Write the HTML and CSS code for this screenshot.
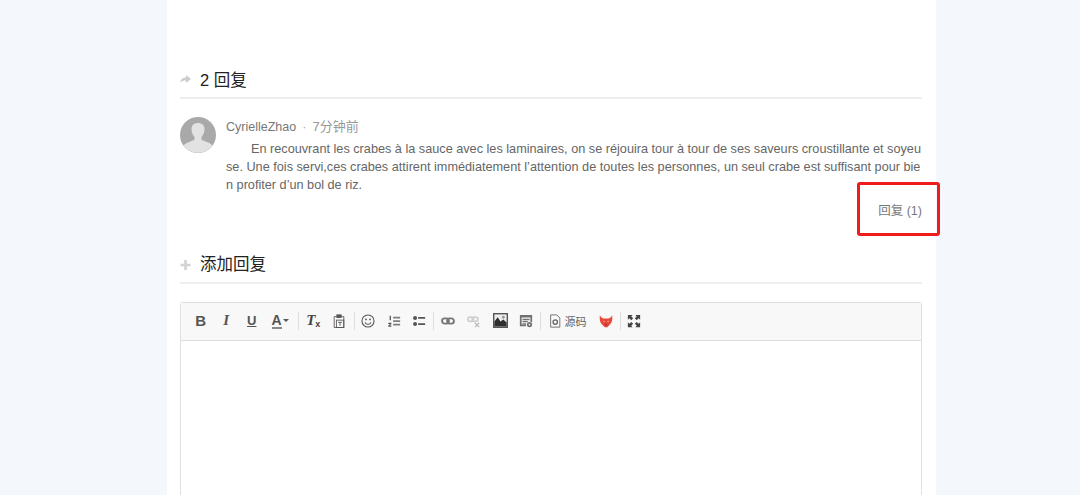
FILE: index.html
```html
<!DOCTYPE html>
<html lang="zh">
<head>
  <meta charset="UTF-8" />
  <meta name="viewport" content="width=device-width, initial-scale=1.0" />
  <title>回复</title>
  <link rel="stylesheet" href="styles.css">
</head>
<body>

  <div class="page">
    <div class="section-title replies-title">
      <svg class="title-icon" viewBox="0 0 11 10"><path d="M0 8.500C.6 5.500 2.500 3.500 6 3.500V1L11 5 6 9V6.500C3.500 6.500 1.500 7 0 8.500Z" fill="#ccc"/></svg>
      <span>2 回复</span>
    </div>

    <div class="comment">
      <svg class="avatar" viewBox="0 0 36 36">
        <circle cx="18" cy="18" r="18" fill="#a9a9a9"/>
        <path d="M3.500 28.500C7 25 12 24.500 14.500 22.500V20C12.500 18 11.500 14.500 11.500 12C11.500 8 14.500 6 18 6S24.500 8 24.500 12C24.500 14.500 23.500 18 21.500 20V22.500C24 24.500 29 25 32.500 28.500A18 18 0 0 1 3.500 28.500Z" fill="#e2e2e2"/>
      </svg>
      <div class="comment-main">
        <div class="comment-meta">
          <span class="author">CyrielleZhao</span><span class="dot">·</span><span class="time">7分钟前</span>
        </div>
        <p class="comment-text">En recouvrant les crabes à la sauce avec les laminaires, on se réjouira tour à tour de ses saveurs croustillante et soyeuse. Une fois servi,ces crabes attirent immédiatement l’attention de toutes les personnes, un seul crabe est suffisant pour bien profiter d’un bol de riz.</p>
        <div class="comment-actions">回复 (1)</div>
      </div>
      <div class="highlight-box"></div>
    </div>

    <div class="section-title add-title">
      <svg class="title-icon" viewBox="0 0 11 11"><path d="M4 0H7V4H11V7H7V11H4V7H0V4H4Z" fill="#d4d4d4"/></svg>
      <span>添加回复</span>
    </div>

    <div class="editor">
      <div class="toolbar">
        <span class="btn txt-b">B</span>
        <span class="btn txt-i">I</span>
        <span class="btn txt-u">U</span>
        <span class="btn btn-color"><span class="txt-a">A</span><i class="caret"></i></span>
        <i class="sep sep-a"></i>
        <span class="btn txt-clear">T<small>x</small></span>
        <span class="btn">
          <svg class="icon" viewBox="0 0 16 16" fill="none" stroke="#555"><path d="M5 3H2.500V15.500H13.500V3H11"/><rect x="5.500" y="1" width="5" height="3" fill="#555"/><rect x="5" y="7" width="8.500" height="8.500"/><path d="M7 9.500H11.500M9.200 9.500V13.500"/></svg>
        </span>
        <i class="sep sep-c"></i>
        <span class="btn">
          <svg class="icon" viewBox="0 0 16 16" fill="none" stroke="#555" stroke-width="1.200"><circle cx="8" cy="8" r="6.900"/><circle cx="5.700" cy="6.200" r="1" fill="#555" stroke="none"/><circle cx="10.300" cy="6.200" r="1" fill="#555" stroke="none"/><path d="M4.500 9.500C5.500 12.500 10.500 12.500 11.500 9.500"/></svg>
        </span>
        <span class="btn">
          <svg class="icon" viewBox="0 0 16 16" fill="#555"><path d="M7 3H15V5H7ZM7 7H15V9H7ZM7 11H15V13H7Z" opacity=".75"/><path d="M3 2H4.500V7H3ZM1.500 10H5V11.500L3.200 13H5V14.500H1.500V13L3.500 11.300H1.500Z"/></svg>
        </span>
        <span class="btn">
          <svg class="icon" viewBox="0 0 16 16" fill="#555"><circle cx="3.500" cy="4.500" r="2.300"/><circle cx="3.500" cy="11.500" r="2.300"/><path d="M7 3.500H15V5.500H7ZM7 10.500H15V12.500H7Z"/></svg>
        </span>
        <i class="sep sep-b"></i>
        <span class="btn">
          <svg class="icon" viewBox="0 0 16 16" fill="none" stroke="#777" stroke-width="2.200"><rect x="1.200" y="5" width="7.800" height="6" rx="3"/><rect x="7" y="5" width="7.800" height="6" rx="3"/></svg>
        </span>
        <span class="btn btn-wide">
          <svg class="icon" viewBox="0 0 16 16" fill="none" stroke="#cfcfcf" stroke-width="2"><rect x="1" y="3.500" width="6.500" height="5" rx="2.500"/><rect x="6" y="3.500" width="6.500" height="5" rx="2.500"/><path d="M9 10L14 15M14 10L9 15" stroke="#bbb" stroke-width="1.500"/></svg>
        </span>
        <span class="btn">
          <svg class="icon icon-lg" viewBox="0 0 16 16"><rect x="0" y="0" width="16" height="16" fill="#555"/><rect x="1.500" y="1.500" width="13" height="13" fill="#eee"/><path d="M1.500 14.500V9L5 4.500L8 9L11 7L14.500 10V14.500Z" fill="#2e2e2e"/><circle cx="11" cy="4.500" r="1.500" fill="#999"/></svg>
        </span>
        <span class="btn">
          <svg class="icon" viewBox="0 0 16 16" fill="#707070"><path d="M1 1H15V9H13V4H3V12H8V14H1Z"/><path d="M4 5.500H12V7H4ZM4 8H10V9.500H4ZM4 10.500H8V12H4Z"/><circle cx="12" cy="12" r="3"/><circle cx="12" cy="12" r="1" fill="#f8f8f8"/></svg>
        </span>
        <i class="sep"></i>
        <span class="btn btn-source">
          <svg class="icon" viewBox="0 0 16 16" fill="none" stroke="#666"><path d="M3 1H10L13.500 4.500V15H3Z"/><circle cx="8.300" cy="9.200" r="2.500" stroke-width="1.500"/></svg>
          <span class="source-label">源码</span>
        </span>
        <span class="btn">
          <svg class="icon" viewBox="0 0 16 16"><path d="M1 1C2 3.500 3.500 4.500 5 5H11C12.500 4.500 14 3.500 15 1C15.500 6 15 9 13 11.500L9.500 15H6.500L3 11.500C1 9 .5 6 1 1Z" fill="#e8473a"/><path d="M5 7.500L7 9H5ZM11 7.500L9 9H11Z" fill="#f9b9a8"/><path d="M6 11H10L8 14Z" fill="#b5372c"/></svg>
        </span>
        <i class="sep"></i>
        <span class="btn">
          <svg class="icon" viewBox="0 0 16 16" fill="#444"><path d="M1 1H6.500L4.800 2.700L7 4.900L4.900 7L2.700 4.800L1 6.500ZM15 1V6.500L13.300 4.800L11.100 7L9 4.900L11.200 2.700L9.500 1ZM1 15V9.500L2.700 11.200L4.900 9L7 11.100L4.800 13.300L6.500 15ZM15 15H9.500L11.200 13.300L9 11.100L11.100 9L13.300 11.200L15 9.500Z"/></svg>
        </span>
      </div>
      <div class="editor-body"></div>
    </div>
  </div>

</body>
</html>
```

FILE: styles.css
```css
html, body {
  height: 100%;
}

body {
  margin: 0;
  background: #f4f7fb;
  font-family: "Liberation Sans", "Noto Sans CJK SC", sans-serif;
  overflow: hidden;
}

.page {
  width: 742px;
  height: 495px;
  margin-left: 167px;
  padding: 0 14px 0 13px;
  background: #fff;
  display: flex;
  flex-direction: column;
}

.section-title {
  display: flex;
  align-items: center;
  flex: none;
  height: 36px;
  border-bottom: 2px solid #eee;
  color: #222;
  font-size: 16.5px;
}

.replies-title {
  margin-top: 61px;
}

.title-icon {
  width: 11px;
  height: 10px;
  margin-right: 9px;
}

.comment {
  position: relative;
  display: flex;
  flex: none;
  margin-top: 18px;
}

.avatar {
  width: 36px;
  height: 36px;
  flex: none;
  margin-right: 10px;
}

.comment-main {
  flex: 1;
  padding-top: 1px;
  font-size: 12.7px;
  line-height: 18px;
  color: #666;
  min-width: 0;
}

.comment-meta {
  height: 18px;
  margin-bottom: 4px;
  color: #777;
}

.author {
  font-size: 12.5px;
}

.dot {
  margin: 0 6px;
  color: #aaa;
}

.time {
  color: #999;
  font-size: 13px;
}

.comment-text {
  margin: 0;
  text-indent: 25px;
  word-break: break-all;
}

.comment-actions {
  margin-top: 8px;
  text-align: right;
  font-size: 12.5px;
  color: #777;
}

.highlight-box {
  position: absolute;
  right: -18px;
  top: 65px;
  box-sizing: border-box;
  width: 83px;
  height: 54px;
  border: 3px solid #f01c1c;
  border-radius: 3px;
}

.add-title {
  box-sizing: border-box;
  height: 38px;
  margin-top: 26px;
  padding-bottom: 2px;
}

.add-title .title-icon {
  margin-top: 4px;
}

.editor {
  display: flex;
  flex-direction: column;
  flex: 1;
  margin-top: 18px;
  border: 1px solid #e0e0e0;
  border-bottom: 0;
  border-radius: 3px 3px 0 0;
  min-height: 0;
}

.toolbar {
  display: flex;
  align-items: center;
  flex: none;
  height: 35px;
  padding: 0 0 2px 7px;
  background: #f8f8f8;
  border-bottom: 1px solid #ddd;
  color: #555;
}

.btn {
  display: flex;
  align-items: center;
  justify-content: center;
  flex: none;
  width: 25.5px;
  height: 22px;
  font-size: 13px;
  font-weight: bold;
}

.btn-wide {
  width: 27px;
}

.btn-color {
  width: 28px;
  justify-content: flex-start;
  padding-left: 7px;
  box-sizing: border-box;
}

.txt-b {
  font-size: 15px;
}

.txt-i {
  font-family: "Liberation Serif", serif;
  font-style: italic;
  font-size: 15px;
}

.txt-u {
  text-decoration: underline;
  font-size: 13px;
}

.txt-a {
  font-size: 14px;
  border-bottom: 2px solid #888;
  line-height: 14px;
}

.caret {
  width: 0;
  height: 0;
  margin-left: 1px;
  border: 3px solid transparent;
  border-top-color: #555;
  border-bottom: 0;
}

.txt-clear {
  font-family: "Liberation Serif", serif;
  font-style: italic;
  font-size: 15px;
  color: #444;
}

.txt-clear small {
  font-family: "Liberation Sans", sans-serif;
  font-style: normal;
  font-size: 9px;
  margin-top: 6px;
}

.icon {
  width: 14px;
  height: 14px;
  flex: none;
}

.icon-lg {
  width: 15px;
  height: 15px;
}

.sep {
  flex: none;
  width: 1px;
  height: 18px;
  margin: 0 1px;
  background: #ddd;
}

.sep-a {
  margin: 0 2px 0 5px;
}

.sep-b {
  margin: 0 1px;
}

.sep-c {
  margin: 0 1px 0 2px;
}

.btn-source {
  width: 45.5px;
  gap: 3px;
  justify-content: flex-start;
  padding-left: 6px;
}

.source-label {
  font-size: 11px;
  font-weight: normal;
  color: #666;
}

.editor-body {
  flex: 1;
  background: #fff;
}
```
